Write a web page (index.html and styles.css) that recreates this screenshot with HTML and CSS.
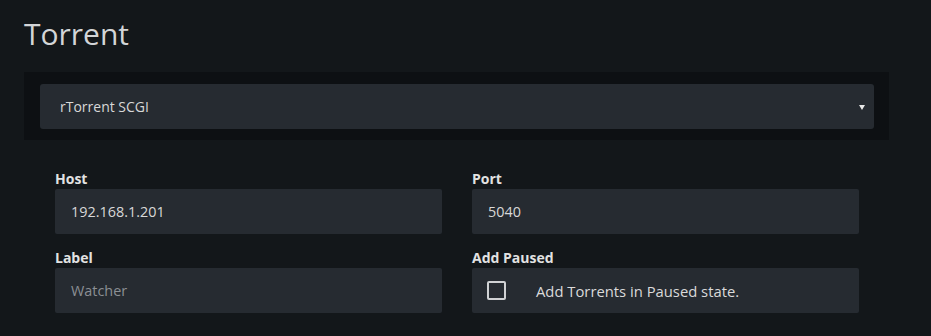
FILE: index.html
```html
<!DOCTYPE html>
<html>
<head>
<meta charset="utf-8">
<link rel="stylesheet" href="styles.css">
</head>
<body>
<h1 class="title">Torrent</h1>
<div class="panel">
  <div class="select">
    <span class="select-text">rTorrent SCGI</span>
    <span class="caret"></span>
  </div>
</div>
<div class="fields">
  <div class="group">
    <label class="lbl">Host</label>
    <div class="input">192.168.1.201</div>
  </div>
  <div class="group">
    <label class="lbl">Port</label>
    <div class="input">5040</div>
  </div>
  <div class="group">
    <label class="lbl">Label</label>
    <div class="input placeholder">Watcher</div>
  </div>
  <div class="group">
    <label class="lbl">Add Paused</label>
    <div class="input check-row">
      <span class="checkbox"></span>
      <span class="check-text">Add Torrents in Paused state.</span>
    </div>
  </div>
</div>
</body>
</html>
```
FILE: styles.css
```css
html, body {
  margin: 0;
  padding: 0;
  background: #13171a;
  font-family: "Open Sans", "Noto Sans", sans-serif;
  color: #d6d6d6;
}
.title {
  margin: 0;
  padding: 14px 0 0 24px;
  height: 58px;
  box-sizing: border-box;
  font-size: 30px;
  font-weight: 400;
  line-height: 40px;
  color: #d3d5d7;
}
.panel {
  margin: 14px 42px 0 24px;
  padding: 12px 15px 11px 16px;
  background: #0d1013;
}
.select {
  height: 45px;
  background: #262b31;
  border-radius: 3px;
  display: flex;
  align-items: center;
  justify-content: space-between;
  padding: 0 9px 0 20px;
  font-size: 14px;
  color: #d8d8d8;
}
.caret {
  width: 0;
  height: 0;
  border-left: 3px solid transparent;
  border-right: 3px solid transparent;
  border-top: 5px solid #e8e8e8;
  margin-top: 1px;
}
.fields {
  display: grid;
  grid-template-columns: 387px 387px;
  column-gap: 30px;
  row-gap: 14px;
  margin: 29px 0 0 55px;
}
.group {
  display: flex;
  flex-direction: column;
}
.lbl {
  font-size: 14px;
  font-weight: 700;
  line-height: 20px;
  color: #e2e2e2;
}
.input {
  height: 45px;
  background: #262b31;
  border-radius: 2px;
  display: flex;
  align-items: center;
  padding: 0 16px;
  font-size: 14.4px;
  color: #d8d8d8;
}
.placeholder {
  color: #8b8f94;
}
.check-row {
  padding-left: 15px;
}
.checkbox {
  width: 15px;
  height: 15px;
  border: 2px solid #d0d2d4;
  border-radius: 2px;
  margin-right: 30px;
  flex: none;
}
.check-text {
  color: #dadada;
  font-size: 14.8px;
}
```
